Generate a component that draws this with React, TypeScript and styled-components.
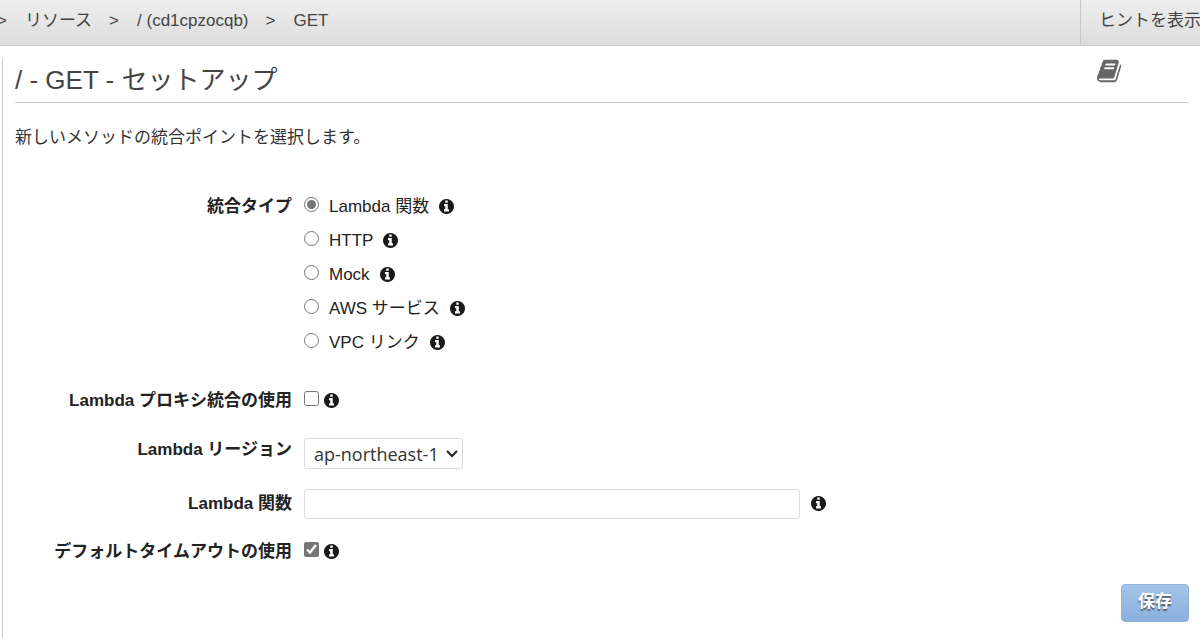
import React from "react";
import styled, { createGlobalStyle } from "styled-components";

const GlobalStyle = createGlobalStyle`
  *, *::before, *::after { box-sizing: border-box; }
  body {
    margin: 0;
    background: #fff;
    color: #222;
    font-family: "Liberation Sans", Arial, "Noto Sans CJK JP", sans-serif;
    font-size: 17px;
    line-height: 24px;
    overflow-x: hidden;
  }
`;

const TopBar = styled.header`
  display: flex;
  height: 46px;
  background: linear-gradient(#eeeeee, #dddddd);
  border-bottom: 1px solid #cccccc;
  color: #444;
  white-space: nowrap;
`;

const Breadcrumbs = styled.nav`
  flex: 1;
  overflow: hidden;
`;

const CrumbList = styled.ol`
  display: flex;
  margin: 0 0 0 -3px;
  padding: 9px 0 0;
  list-style: none;
`;

const Crumb = styled.li`
  display: flex;
  margin-right: 17px;

  &::before {
    content: ">";
    margin-right: 18px;
  }
`;

const CrumbLink = styled.a`
  color: inherit;
  text-decoration: none;
`;

const HintButton = styled.button`
  flex: none;
  width: 120px;
  padding: 0 0 3px 18px;
  border: 0;
  border-left: 1px solid #c8c8c8;
  background: none;
  color: inherit;
  font: inherit;
  text-align: left;
  overflow: hidden;
`;

const Panel = styled.main`
  margin: 12px 0 0 2px;
  padding: 0 11px 0 12px;
  min-height: calc(100vh - 58px);
  border-left: 1px solid #cccccc;
`;

const TitleRow = styled.div`
  display: flex;
  justify-content: space-between;
  height: 45px;
  padding-right: 66px;
  border-bottom: 1px solid #cccccc;
`;

const Title = styled.h1`
  margin: 0;
  padding-top: 4px;
  color: #444;
  font-size: 26px;
  font-weight: 400;
  line-height: 36px;
`;

const DocsButton = styled.button`
  align-self: flex-start;
  padding: 0;
  border: 0;
  background: none;
  color: #666;
`;

const BookSvg = styled.svg`
  display: block;
  width: 26px;
  height: 26px;
  fill: currentColor;
`;

const Intro = styled.p`
  margin: 23px 0 40px;
  color: #333;
`;

const Form = styled.form`
  display: flex;
  flex-direction: column;
`;

const Field = styled.div<{ $gap: number }>`
  display: grid;
  grid-template-columns: 277px minmax(0, 1fr);
  column-gap: 12px;
  align-items: center;
  margin-bottom: ${(p) => p.$gap}px;
`;

const labelText = `
  font-weight: 700;
  text-align: right;
`;

const Label = styled.label<{ $top?: boolean }>`
  ${labelText}
  align-self: ${(p) => (p.$top ? "start" : "center")};
`;

const GroupLabel = styled.span`
  ${labelText}
  align-self: start;
  padding-top: 5px;
`;

const Options = styled.div`
  display: flex;
  flex-direction: column;
`;

const Option = styled.div`
  display: flex;
  align-items: center;
  height: 34px;
`;

const OptionLabel = styled.label`
  display: flex;
  align-items: center;
  gap: 10px;
  margin-right: 10px;
`;

const Tick = styled.input`
  width: 15px;
  height: 15px;
  margin: 0 0 6px;
  accent-color: #757575;
`;

const Controls = styled.div<{ $gap: number }>`
  display: flex;
  align-items: center;
  gap: ${(p) => p.$gap}px;
`;

const InfoButton = styled.button`
  padding: 0 0 2px;
  border: 0;
  background: none;
  color: #1a1a1a;
`;

const InfoSvg = styled.svg`
  display: block;
  width: 15px;
  height: 15px;
  fill: currentColor;
`;

const SelectBox = styled.div`
  display: grid;
  align-items: center;
  width: 159px;
`;

const Select = styled.select`
  grid-area: 1 / 1;
  width: 100%;
  height: 31px;
  padding: 0 0 0 9px;
  border: 1px solid #dcdcdc;
  border-radius: 3px;
  appearance: none;
  background: #fff;
  color: #333;
  font-family: "Open Sans", sans-serif;
  font-size: 18px;
`;

const Chevron = styled.svg`
  grid-area: 1 / 1;
  justify-self: end;
  width: 14px;
  height: 10px;
  margin-right: 4px;
  fill: none;
  stroke: #222;
  stroke-width: 2;
  pointer-events: none;
`;

const TextInput = styled.input`
  width: 56%;
  height: 30px;
  padding: 0 8px;
  border: 1px solid #dcdcdc;
  border-radius: 3px;
  font: inherit;
`;

const Actions = styled.div`
  display: flex;
  justify-content: flex-end;
`;

const SaveButton = styled.button`
  width: 68px;
  height: 38px;
  padding: 0 0 3px;
  border: 1px solid #8db3dc;
  border-radius: 4px;
  background: linear-gradient(#a4c4e8, #8ab0dc);
  color: #fff;
  font: inherit;
  font-weight: 700;
  text-shadow: 0 2px 1px #567;
`;

const Info = ({ about }: { about: string }) => (
  <InfoButton type="button" aria-label={about}>
    <InfoSvg viewBox="128 128 1536 1536" aria-hidden="true">
      <path d="M1152 1376v-160q0-14-9-23t-23-9h-96v-512q0-14-9-23t-23-9h-320q-14 0-23 9t-9 23v160q0 14 9 23t23 9h96v320h-96q-14 0-23 9t-9 23v160q0 14 9 23t23 9h448q14 0 23-9t9-23zm-128-896v-160q0-14-9-23t-23-9h-192q-14 0-23 9t-9 23v160q0 14 9 23t23 9h192q14 0 23-9t9-23zm640 416q0 209-103 385.5t-279.5 279.5-385.5 103-385.5-103-279.5-279.5-103-385.5 103-385.5 279.5-279.5 385.5-103 385.5 103 279.5 279.5 103 385.5z" />
    </InfoSvg>
  </InfoButton>
);

const Book = () => (
  <BookSvg viewBox="0 0 1792 1792" aria-hidden="true">
    <path d="M1639 478q40 57 18 129l-275 906q-19 64-76.5 107.5t-122.5 43.5h-923q-77 0-148.5-53.5t-99.5-131.5q-24-67-2-127 0-4 3-27t4-37q1-8-3-21.5t-3-19.5q2-11 8-21t16.5-23.5 16.5-23.5q23-38 45-91.5t30-91.5q3-10 .5-30t-.5-28q3-11 17-28t17-23q21-36 42-92t25-90q1-9-2.5-32t.5-28q4-13 22-30.5t22-22.5q19-26 42.5-84.5t27.5-96.5q1-8-3-25.5t-2-26.5q2-8 9-18t18-23 17-21q8-12 16.5-30.5t15-35 16-36 19.5-32 26.5-23.5 36-11.5 47.5 5.5l-1 3q38-9 51-9h761q74 0 114 56t18 130l-274 906q-36 119-71.5 153.5t-128.5 34.5h-869q-27 0-38 15-11 16-1 43 24 70 144 70h923q29 0 56-15.5t35-41.5l300-987q7-22 5-57 38 15 59 43zm-1064 2q-4 13 2 22.5t20 9.5h608q13 0 25.5-9.5t16.5-22.5l21-64q4-13-2-22.5t-20-9.5h-608q-13 0-25.5 9.5t-16.5 22.5zm-83 256q-4 13 2 22.5t20 9.5h608q13 0 25.5-9.5t16.5-22.5l21-64q4-13-2-22.5t-20-9.5h-608q-13 0-25.5 9.5t-16.5 22.5z" />
  </BookSvg>
);

const crumbs = ["リソース", "/ (cd1cpzocqb)", "GET"];
const types = ["Lambda 関数", "HTTP", "Mock", "AWS サービス", "VPC リンク"];

export default function App() {
  return (
    <>
      <GlobalStyle />
      <TopBar>
        <Breadcrumbs>
          <CrumbList>
            {crumbs.map((c) => (
              <Crumb key={c}>
                <CrumbLink href="#">{c}</CrumbLink>
              </Crumb>
            ))}
          </CrumbList>
        </Breadcrumbs>
        <HintButton type="button">ヒントを表示</HintButton>
      </TopBar>
      <Panel>
        <TitleRow>
          <Title>/ - GET - セットアップ</Title>
          <DocsButton type="button" aria-label="ドキュメント">
            <Book />
          </DocsButton>
        </TitleRow>
        <Intro>新しいメソッドの統合ポイントを選択します。</Intro>
        <Form onSubmit={(e) => e.preventDefault()}>
          <Field $gap={29} role="radiogroup" aria-labelledby="type-label">
            <GroupLabel id="type-label">統合タイプ</GroupLabel>
            <Options>
              {types.map((t, i) => (
                <Option key={t}>
                  <OptionLabel>
                    <Tick type="radio" name="type" defaultChecked={i === 0} />
                    {t}
                  </OptionLabel>
                  <Info about={t} />
                </Option>
              ))}
            </Options>
          </Field>
          <Field $gap={25}>
            <Label htmlFor="proxy">Lambda プロキシ統合の使用</Label>
            <Controls $gap={5}>
              <Tick type="checkbox" id="proxy" />
              <Info about="Lambda プロキシ統合の使用" />
            </Controls>
          </Field>
          <Field $gap={20}>
            <Label htmlFor="region" $top>
              Lambda リージョン
            </Label>
            <SelectBox>
              <Select id="region" defaultValue="ap-northeast-1">
                <option>ap-northeast-1</option>
              </Select>
              <Chevron viewBox="0 0 14 10" aria-hidden="true">
                <path d="M2 2l5 5 5-5" />
              </Chevron>
            </SelectBox>
          </Field>
          <Field $gap={21}>
            <Label htmlFor="fn">Lambda 関数</Label>
            <Controls $gap={11}>
              <TextInput id="fn" type="text" />
              <Info about="Lambda 関数" />
            </Controls>
          </Field>
          <Field $gap={20}>
            <Label htmlFor="timeout">デフォルトタイムアウトの使用</Label>
            <Controls $gap={5}>
              <Tick type="checkbox" id="timeout" defaultChecked />
              <Info about="デフォルトタイムアウトの使用" />
            </Controls>
          </Field>
          <Actions>
            <SaveButton type="submit">保存</SaveButton>
          </Actions>
        </Form>
      </Panel>
    </>
  );
}
